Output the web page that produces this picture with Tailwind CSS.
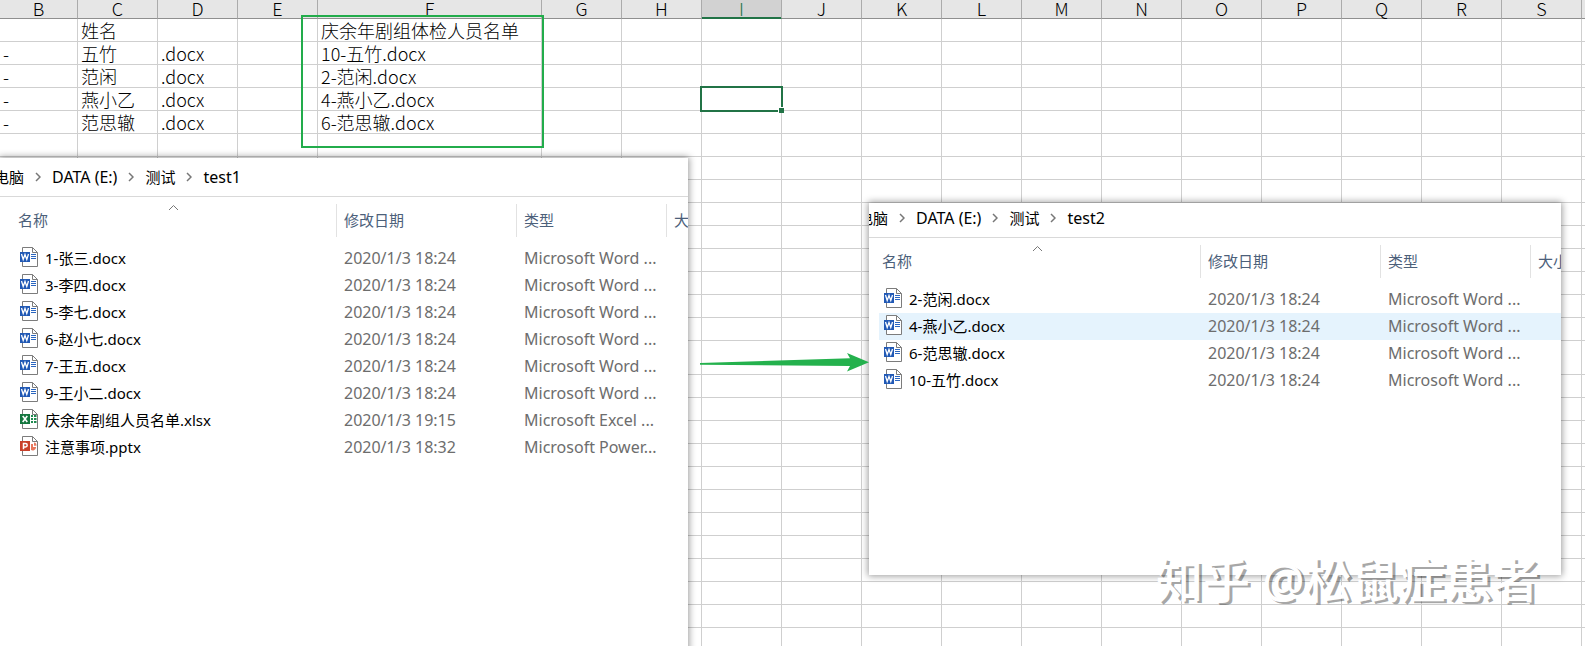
<!DOCTYPE html>
<html lang="zh-CN">

<head>
  <meta charset="UTF-8">
  <title>庆余年剧组体检人员名单</title>
  <script src="https://cdn.jsdelivr.net/npm/@tailwindcss/browser@4"></script>
</head>

<body class="relative h-screen overflow-hidden bg-white font-['Noto_Sans','Noto_Sans_CJK_SC',sans-serif]">

  <!-- Icons -->
  <svg class="hidden">
    <symbol id="page" viewBox="0 0 18 20">
      <path d="M2.5.5h10l5 5v14h-15z" fill="#fff" stroke="#7c7c7c" />
      <path d="M12.5.5v5h5" fill="none" stroke="#7c7c7c" />
    </symbol>
    <symbol id="word" viewBox="0 0 18 20">
      <use href="#page" />
      <path d="M11 7.5h5M11 9.5h5M11 11.5h5" stroke="#2b66c0" />
      <path d="M0 5h10v10H0z" fill="#2159b5" />
      <path d="M1.5 7l1.700 5.500L5 7.500l1.800 5L8.500 7" fill="none" stroke="#fff" stroke-width="1.3" />
    </symbol>
    <symbol id="excel" viewBox="0 0 18 20">
      <use href="#page" />
      <path d="M11 7h2M14 7h2.5M11 10h2M14 10h2.5M11 13h2M14 13h2.5" stroke="#1f8a50" stroke-width="2" />
      <path d="M0 5h10v10H0z" fill="#14773f" />
      <path d="M2.7 7l4.6 6M7.3 7l-4.6 6" stroke="#fff" stroke-width="1.6" />
    </symbol>
    <symbol id="powerpoint" viewBox="0 0 18 20">
      <use href="#page" />
      <path d="M11 8h2v3h3v1a3.4 3.4 0 0 1-5 2z" fill="#e8785e" />
      <path d="M14 6.5a3 3 0 0 1 2.5 3.2H14z" fill="#e8785e" />
      <path d="M0 5h10v10H0z" fill="#c9402a" />
      <path d="M3.5 13.2V7.5h2a1.7 1.7 0 0 1 0 3.4h-2" fill="none" stroke="#fff" stroke-width="1.5" />
    </symbol>
  </svg>

  <!-- Spreadsheet -->
  <table class="w-[1662px] table-fixed border-separate border-spacing-0 font-['Noto_Sans_CJK_SC',sans-serif] text-lg font-light text-black">
    <colgroup id="sheetCols"></colgroup>
    <thead>
      <tr id="sheetHead"></tr>
    </thead>
    <tbody id="sheetBody"></tbody>
  </table>

  <!-- Highlight around the name list -->
  <div class="absolute top-[15px] left-[301px] h-[133px] w-[243px] border-2 border-[#22ac4b]"></div>

  <!-- Explorer: test1 -->
  <section class="absolute top-[158px] left-0 h-[500px] w-[688px] overflow-hidden bg-white shadow-[0_0_7px_1px_rgba(0,0,0,0.4)]">
    <div id="test1"></div>
  </section>

  <!-- Explorer: test2 -->
  <section class="absolute top-[203px] left-[869px] h-[372px] w-[692px] overflow-hidden bg-white shadow-[0_0_7px_1px_rgba(0,0,0,0.4)]">
    <div id="test2" class="-mt-1 -ml-[5px]"></div>
  </section>

  <!-- Arrow from test1 to test2 -->
  <svg class="absolute top-[352px] left-[700px]" width="169" height="20" viewBox="0 0 169 20">
    <path d="M0 11L150 6.2 147 1l22 9.2L147 19.5l3-5.5L0 12.8z" fill="#24b14d" />
  </svg>

  <p class="absolute top-[548px] left-[1156px] text-[47px] leading-[64px] font-medium whitespace-nowrap text-white [text-shadow:3px_2px_0_rgba(0,0,0,0.35)]">知乎 @松鼠症患者</p>

  <script>
    const letters = 'BCDEFGHIJKLMNOPQRST'.split('');
    const rowCount = 27;
    const cells = {
      C1: '姓名', F1: '庆余年剧组体检人员名单',
      B2: '-', C2: '五竹', D2: '.docx', F2: '10-五竹.docx',
      B3: '-', C3: '范闲', D3: '.docx', F3: '2-范闲.docx',
      B4: '-', C4: '燕小乙', D4: '.docx', F4: '4-燕小乙.docx',
      B5: '-', C5: '范思辙', D5: '.docx', F5: '6-范思辙.docx'
    };

    const test1Files = [
      { icon: 'word', name: '1-张三.docx', date: '2020/1/3 18:24', type: 'Microsoft Word ...' },
      { icon: 'word', name: '3-李四.docx', date: '2020/1/3 18:24', type: 'Microsoft Word ...' },
      { icon: 'word', name: '5-李七.docx', date: '2020/1/3 18:24', type: 'Microsoft Word ...' },
      { icon: 'word', name: '6-赵小七.docx', date: '2020/1/3 18:24', type: 'Microsoft Word ...' },
      { icon: 'word', name: '7-王五.docx', date: '2020/1/3 18:24', type: 'Microsoft Word ...' },
      { icon: 'word', name: '9-王小二.docx', date: '2020/1/3 18:24', type: 'Microsoft Word ...' },
      { icon: 'excel', name: '庆余年剧组人员名单.xlsx', date: '2020/1/3 19:15', type: 'Microsoft Excel ...' },
      { icon: 'powerpoint', name: '注意事项.pptx', date: '2020/1/3 18:32', type: 'Microsoft Power...' }
    ];
    const test2Files = [
      { icon: 'word', name: '2-范闲.docx', date: '2020/1/3 18:24', type: 'Microsoft Word ...' },
      { icon: 'word', name: '4-燕小乙.docx', date: '2020/1/3 18:24', type: 'Microsoft Word ...', selected: true },
      { icon: 'word', name: '6-范思辙.docx', date: '2020/1/3 18:24', type: 'Microsoft Word ...' },
      { icon: 'word', name: '10-五竹.docx', date: '2020/1/3 18:24', type: 'Microsoft Word ...' }
    ];

    // Spreadsheet grid
    function colWidth(letter) {
      if (letter === 'B') return 'w-[78px]';
      return letter === 'F' ? 'w-56' : 'w-20';
    }

    function renderSheet() {
      document.getElementById('sheetCols').innerHTML =
        letters.map(l => `<col class="${colWidth(l)}">`).join('');

      document.getElementById('sheetHead').innerHTML = letters.map(l => `
        <th class="h-[19px] border-r border-b p-0 align-top font-light leading-[16px] ${l === 'I'
          ? 'border-r-[#ababab] border-b-[#217346] bg-[#d2d2d2] text-[#217346] shadow-[inset_0_-1px_0_#217346]'
          : 'border-r-[#ababab] border-b-[#8f8f8f] bg-[#e6e6e6]'}">${l}</th>`).join('');

      let html = '';
      for (let r = 1; r <= rowCount; r++) {
        html += `<tr class="${r === 15 ? 'h-[34px]' : 'h-[23px]'}">`;
        letters.forEach(l => {
          const active = l + r === 'I4' ? `
            <div class="absolute -top-[2px] -right-[2px] -bottom-[2px] -left-[2px] z-10 border-2 border-[#217346]">
              <span class="absolute -right-[3px] -bottom-[3px] size-[6px] border-t border-l border-white bg-[#217346]"></span>
            </div>` : '';
          html += `<td class="relative border-r border-b border-[#cfcfcf] px-[3px] py-0 leading-[22px] whitespace-nowrap">${cells[l + r] || ''}${active}</td>`;
        });
        html += '</tr>';
      }
      document.getElementById('sheetBody').innerHTML = html;
    }

    // Explorer window: path bar and file list
    function renderExplorer(id, folder, files) {
      const arrow = `
        <svg class="mx-[11px]" width="6" height="10" viewBox="0 0 6 10">
          <path d="M1 1l4 4-4 4" fill="none" stroke="#777" stroke-width="1.5" />
        </svg>`;
      const rows = files.map(f => `
        <tr class="h-[27px] text-[#6d6d6d] ${f.selected ? 'bg-[#e5f3fd]' : ''}">
          <td class="p-0 pb-[2px] pl-[5px] text-[15px] text-black">
            <span class="flex items-center gap-[7px]">
              <svg class="-mt-[2px] shrink-0" width="18" height="20"><use href="#${f.icon}" /></svg>${f.name}
            </span>
          </td>
          <td class="p-0 pb-[2px] pl-[7px]">${f.date}</td>
          <td class="p-0 pb-[2px] pl-[7px]">${f.type}</td>
          <td></td>
        </tr>`).join('');

      document.getElementById(id).innerHTML = `
        <nav class="flex h-[39px] items-center border-b border-[#d9d9d9] text-[15px] whitespace-nowrap text-black">
          <a href="#" class="-ml-[21px]">此电脑</a>${arrow}
          <a href="#" class="text-base">DATA (E:)</a>${arrow}
          <a href="#">测试</a>${arrow}
          <a href="#" class="text-base">${folder}</a>
        </nav>
        <div class="pt-[7px] pl-[15px]">
          <table class="w-full table-fixed border-separate border-spacing-0 text-base leading-[22px] whitespace-nowrap">
            <colgroup>
              <col class="w-[322px]"><col class="w-[180px]"><col class="w-[150px]"><col>
            </colgroup>
            <thead>
              <tr class="h-[33px] text-left text-[15px] text-[#4c607a]">
                <th class="relative border-r border-[#e2e2e2] p-0 pb-[2px] pl-[3px] font-normal">
                  <button>名称</button>
                  <svg class="absolute top-0 left-[153px]" width="11" height="7" viewBox="0 0 11 7">
                    <path d="M1 6l4.5-4.5L10 6" fill="none" stroke="#777" />
                  </svg>
                </th>
                <th class="border-r border-[#e2e2e2] p-0 pb-[2px] pl-[7px] font-normal"><button>修改日期</button></th>
                <th class="border-r border-[#e2e2e2] p-0 pb-[2px] pl-[7px] font-normal"><button>类型</button></th>
                <th class="overflow-hidden p-0 pb-[2px] pl-[7px] font-normal"><button>大小</button></th>
              </tr>
            </thead>
            <tbody>
              <tr class="h-2"></tr>
              ${rows}
            </tbody>
          </table>
        </div>`;
    }

    renderSheet();
    renderExplorer('test1', 'test1', test1Files);
    renderExplorer('test2', 'test2', test2Files);
  </script>
</body>

</html>
